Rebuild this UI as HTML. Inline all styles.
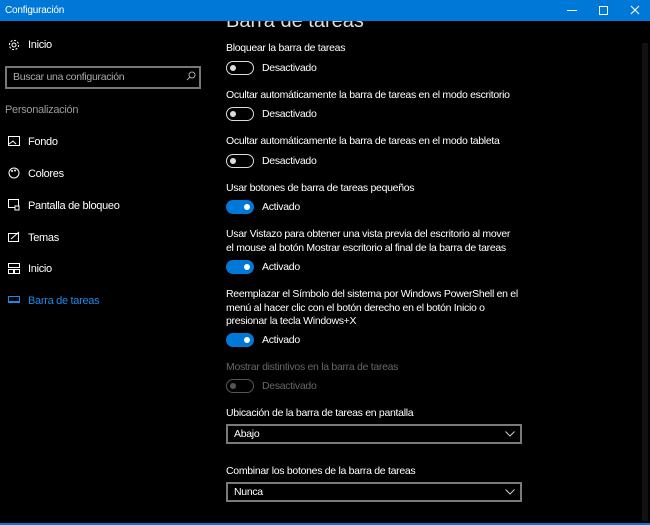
<!DOCTYPE html>
<html><head><meta charset="utf-8"><style>
*{margin:0;padding:0;box-sizing:border-box}
body{width:650px;height:525px;background:#000;overflow:hidden;position:relative;font-family:"Liberation Sans",sans-serif;font-size:10.5px;letter-spacing:-0.3px;color:#fff}
.a{position:absolute;white-space:nowrap}
.tb{position:absolute;left:0;top:0;width:650px;height:21px;background:#0078d7;z-index:5}
.tg{position:absolute;width:28px;height:14px;border:1.5px solid #ddd;border-radius:7px}
.tg::after{content:"";position:absolute;left:3px;top:2.5px;width:6px;height:6px;border-radius:50%;background:#ddd}
.on{background:#0078d7;border-color:#0078d7}
.on::after{left:auto;right:3px;background:#fff}
.dis{border-color:#555}.dis::after{background:#555}
.dd{position:absolute;left:226px;width:296px;height:20px;border:2px solid #7a7a7a}
.dd span{position:absolute;left:6px;top:2px}
.dd svg{position:absolute;right:5px;top:5px}
.ic{position:absolute;left:8px}
.s{font-size:11px}
</style></head><body>
<div class="tb">
<div class="a" style="left:5px;top:5px;font-size:10px;letter-spacing:-0.2px">Configuración</div>
<div class="a" style="left:567px;top:10px;width:10px;height:1px;background:#fff"></div>
<div class="a" style="left:599px;top:6px;width:9px;height:9px;border:1px solid #fff"></div>
<svg class="a" style="left:630px;top:5px" width="10" height="10"><path d="M1 1L9 9M9 1L1 9" stroke="#fff" stroke-width="1.1"/></svg>
</div>
<div class="a" style="left:226px;top:10px;font-size:20px;color:#ddd;letter-spacing:0">Barra de tareas</div>
<div class="a" style="left:642px;top:43px;width:6px;height:478px;background:#121212"></div>
<div class="a" style="left:0;top:523px;width:650px;height:2px;background:#0078d7"></div>

<!-- sidebar -->
<svg class="ic" style="top:39px" width="12" height="12" viewBox="0 0 12 12"><circle cx="6" cy="6" r="2" fill="none" stroke="#fff"/><circle cx="6" cy="6" r="4.6" fill="none" stroke="#fff" stroke-dasharray="2 1.6"/></svg>
<div class="a s" style="left:28px;top:39px">Inicio</div>
<div class="a" style="left:5px;top:66px;width:196px;height:23px;border:2px solid #777"></div>
<div class="a" style="left:13px;top:71px;color:#aaa">Buscar una configuración</div>
<svg class="a" style="left:186px;top:71px" width="10" height="10"><circle cx="6" cy="4" r="3" fill="none" stroke="#aaa"/><path d="M4 6L1 9" stroke="#aaa"/></svg>
<div class="a s" style="left:5px;top:104px;color:#999">Personalización</div>
<svg class="ic" style="top:136px" width="12" height="11"><rect x=".5" y=".5" width="11" height="9" fill="none" stroke="#fff"/><path d="M1 8L5 5L8 8" stroke="#fff" fill="none"/></svg>
<div class="a s" style="left:28px;top:136px">Fondo</div>
<svg class="ic" style="top:167px" width="12" height="12"><circle cx="6" cy="6" r="5" fill="none" stroke="#fff"/><circle cx="4" cy="4" r="1" fill="#fff"/><circle cx="7" cy="3.5" r="1" fill="#fff"/></svg>
<div class="a s" style="left:28px;top:168px">Colores</div>
<svg class="ic" style="top:199px" width="12" height="12"><rect x=".5" y=".5" width="10" height="8" fill="none" stroke="#fff"/><rect x="7" y="7" width="4" height="4" fill="#000" stroke="#fff"/></svg>
<div class="a s" style="left:28px;top:200px">Pantalla de bloqueo</div>
<svg class="ic" style="top:231px" width="12" height="12"><rect x=".5" y="2.5" width="10" height="8" fill="none" stroke="#fff"/><path d="M3 8L11 1" stroke="#fff"/></svg>
<div class="a s" style="left:28px;top:232px">Temas</div>
<svg class="ic" style="top:263px" width="12" height="11"><rect x=".5" y=".5" width="11" height="4" fill="none" stroke="#fff"/><rect x=".5" y="6.5" width="5" height="4" fill="none" stroke="#fff"/><rect x="6.5" y="6.5" width="5" height="4" fill="none" stroke="#fff"/></svg>
<div class="a s" style="left:28px;top:263px">Inicio</div>
<svg class="ic" style="top:296px" width="12" height="8"><rect x=".5" y=".5" width="11" height="6" fill="none" stroke="#1a8ae8"/><rect x="1" y="5" width="10" height="2" fill="#1a8ae8"/></svg>
<div class="a s" style="left:28px;top:295px;color:#1a8ae8">Barra de tareas</div>

<!-- content -->
<div class="a" style="left:226px;top:42px">Bloquear la barra de tareas</div>
<div class="tg" style="left:226px;top:61px"></div><div class="a" style="left:262px;top:62px">Desactivado</div>
<div class="a" style="left:226px;top:89px">Ocultar automáticamente la barra de tareas en el modo escritorio</div>
<div class="tg" style="left:226px;top:107px"></div><div class="a" style="left:262px;top:108px">Desactivado</div>
<div class="a" style="left:226px;top:135px">Ocultar automáticamente la barra de tareas en el modo tableta</div>
<div class="tg" style="left:226px;top:154px"></div><div class="a" style="left:262px;top:155px">Desactivado</div>
<div class="a" style="left:226px;top:182px">Usar botones de barra de tareas pequeños</div>
<div class="tg on" style="left:226px;top:200px"></div><div class="a" style="left:262px;top:201px">Activado</div>
<div class="a" style="left:226px;top:228px;line-height:13.5px">Usar Vistazo para obtener una vista previa del escritorio al mover<br>el mouse al botón Mostrar escritorio al final de la barra de tareas</div>
<div class="tg on" style="left:226px;top:260px"></div><div class="a" style="left:262px;top:261px">Activado</div>
<div class="a" style="left:226px;top:288px;line-height:13.5px">Reemplazar el Símbolo del sistema por Windows PowerShell en el<br>menú al hacer clic con el botón derecho en el botón Inicio o<br>presionar la tecla Windows+X</div>
<div class="tg on" style="left:226px;top:333px"></div><div class="a" style="left:262px;top:334px">Activado</div>
<div class="a" style="left:226px;top:361px;color:#666">Mostrar distintivos en la barra de tareas</div>
<div class="tg dis" style="left:226px;top:379px"></div><div class="a" style="left:262px;top:380px;color:#666">Desactivado</div>
<div class="a" style="left:226px;top:407px">Ubicación de la barra de tareas en pantalla</div>
<div class="dd" style="top:424px"><span>Abajo</span><svg width="10" height="6"><path d="M.5 .5L5 5L9.5 .5" fill="none" stroke="#ccc"/></svg></div>
<div class="a" style="left:226px;top:465px">Combinar los botones de la barra de tareas</div>
<div class="dd" style="top:482px"><span>Nunca</span><svg width="10" height="6"><path d="M.5 .5L5 5L9.5 .5" fill="none" stroke="#ccc"/></svg></div>
</body></html>
